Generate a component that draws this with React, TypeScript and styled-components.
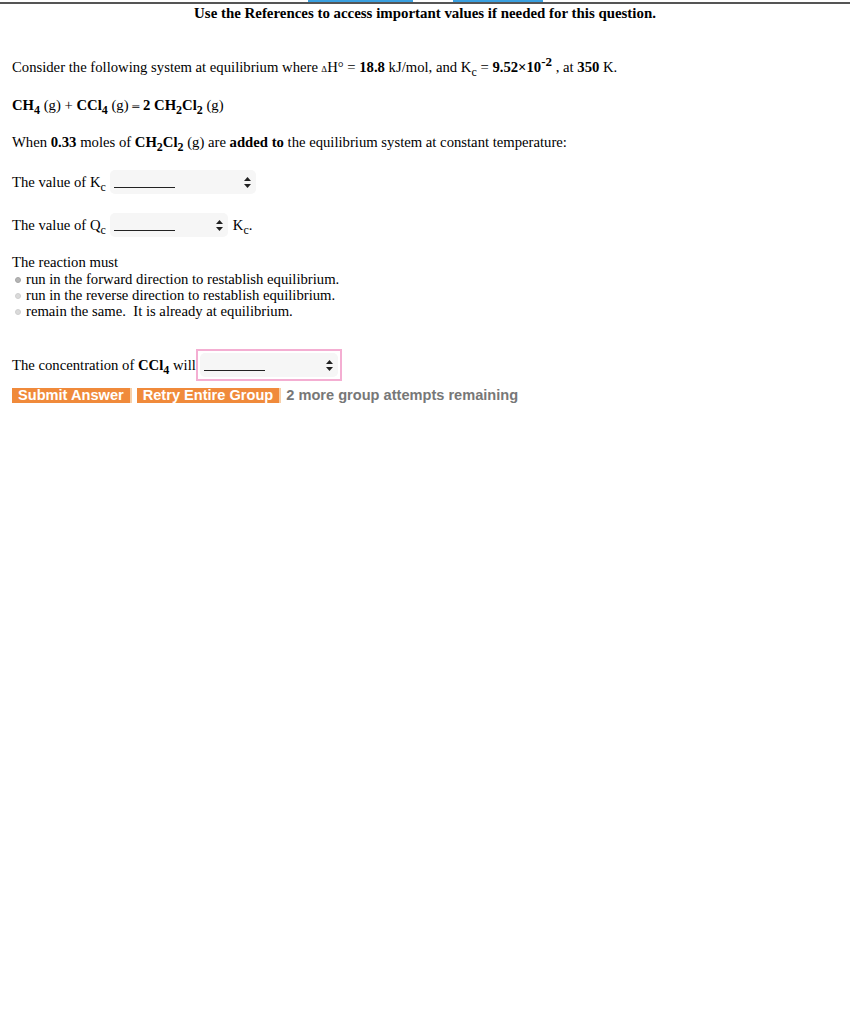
import React from "react";
import styled, { createGlobalStyle } from "styled-components";

const Global = createGlobalStyle`
  html, body { margin: 0; padding: 0; background: #fff; }
  body { font-family: "Liberation Serif", "Times New Roman", serif; color: #000; }
`;

const Page = styled.div`
  width: 850px;
  min-height: 1024px;
`;

const TopRule = styled.div`
  height: 2px;
  margin-top: 2px;
  background: #555;
  display: flex;
  justify-content: center;
  gap: 40px;
`;

const TopLinkStub = styled.span<{ $w: number }>`
  display: block;
  width: ${(p) => p.$w}px;
  height: 2px;
  background: #3aa0e0;
  margin-top: -2px;
`;

const Heading = styled.div`
  text-align: center;
  font-weight: bold;
  font-size: 14.9px;
  line-height: 16px;
  margin-top: 1px;
`;

const Content = styled.div`
  padding: 0 12px;
  font-size: 14.7px;
`;

const Para = styled.div<{ $mt: number }>`
  margin-top: ${(p) => p.$mt}px;
  line-height: 18px;
  white-space: nowrap;
`;

const Sub = styled.sub`
  font-size: 12px;
  vertical-align: -4px;
  line-height: 0;
`;

const Sup = styled.sup`
  font-size: 13px;
  font-weight: bold;
  vertical-align: 6px;
  line-height: 0;
`;

const Delta = styled.span`
  font-size: 9px;
`;

const Equil = styled.span`
  font-size: 10px;
`;

const Row = styled.div<{ $mt: number }>`
  margin-top: ${(p) => p.$mt}px;
  display: flex;
  align-items: center;
  white-space: nowrap;
  height: 24px;
`;

const Label = styled.span<{ $mr?: number }>`
  margin-right: ${(p) => p.$mr ?? 4}px;
`;

const After = styled.span`
  margin-left: 5px;
`;

const SelectBox = styled.div<{ $w: number }>`
  width: ${(p) => p.$w}px;
  height: 24px;
  box-sizing: border-box;
  background: #f6f6f6;
  border-radius: 5px;
  display: flex;
  align-items: center;
  justify-content: space-between;
  padding: 0 5px 0 4px;
`;

const FocusRing = styled.div`
  border: 2px solid #f4aed2;
  padding: 2px;
  display: flex;
`;

const Blank = styled.span`
  display: block;
  width: 61px;
  height: 1px;
  background: #222;
  margin-top: 10px;
`;

const Arrows = styled.svg`
  width: 7px;
  height: 11px;
  display: block;
`;

const RadioRow = styled.div`
  display: flex;
  align-items: center;
  line-height: 16px;
  white-space: nowrap;
`;

const Radio = styled.span<{ $dark?: boolean }>`
  width: 4px;
  height: 4px;
  border-radius: 50%;
  background: ${(p) => (p.$dark ? "#b5b5b5" : "#dadada")};
  border: 1px solid ${(p) => (p.$dark ? "#a5a5a5" : "#cfcfcf")};
  margin: 1px 5px 0 3px;
  flex: none;
`;

const Buttons = styled.div`
  margin-top: 10px;
  display: flex;
  align-items: center;
  font-family: "Liberation Sans", Arial, sans-serif;
  font-weight: bold;
  font-size: 14.6px;
`;

const OrangeButton = styled.span`
  background: #f08a3b;
  color: #fff;
  padding: 0 6px;
  line-height: 15px;
  height: 15px;
  display: inline-flex;
  align-items: center;
  margin-right: 7px;
  box-shadow: 2px 0 0 #f7cfa8;
`;

const Remaining = styled.span`
  color: #777;
`;

const SelectArrows = () => (
  <Arrows viewBox="0 0 7 11">
    <path d="M3.5 0 L7 4 L0 4 Z" fill="#222" />
    <path d="M3.5 11 L7 7 L0 7 Z" fill="#222" />
  </Arrows>
);

export default function App() {
  return (
    <Page>
      <Global />
      <TopRule>
        <TopLinkStub $w={105} />
        <TopLinkStub $w={90} />
      </TopRule>
      <Heading>Use the References to access important values if needed for this question.</Heading>
      <Content>
        <Para $mt={37}>
          Consider the following system at equilibrium where <Delta>∆</Delta>H° = <b>18.8</b> kJ/mol, and K<Sub>c</Sub> = <b>9.52×10<Sup>-2</Sup></b> , at <b>350</b> K.
        </Para>
        <Para $mt={18}>
          <b>CH<Sub>4</Sub></b> (g) + <b>CCl<Sub>4</Sub></b> (g) <Equil>═</Equil> <b>2 CH<Sub>2</Sub>Cl<Sub>2</Sub></b> (g)
        </Para>
        <Para $mt={17}>
          When <b>0.33</b> moles of <b>CH<Sub>2</Sub>Cl<Sub>2</Sub></b> (g) are <b>added to</b> the equilibrium system at constant temperature:
        </Para>
        <Row $mt={19}>
          <Label>The value of K<Sub>c</Sub></Label>
          <SelectBox $w={146}>
            <Blank />
            <SelectArrows />
          </SelectBox>
        </Row>
        <Row $mt={19}>
          <Label>The value of Q<Sub>c</Sub></Label>
          <SelectBox $w={118}>
            <Blank />
            <SelectArrows />
          </SelectBox>
          <After>K<Sub>c</Sub>.</After>
        </Row>
        <Para $mt={16}>The reaction must</Para>
        <div>
          <RadioRow><Radio $dark />run in the forward direction to restablish equilibrium.</RadioRow>
          <RadioRow><Radio />run in the reverse direction to restablish equilibrium.</RadioRow>
          <RadioRow><Radio />remain the same.&nbsp; It is already at equilibrium.</RadioRow>
        </div>
        <Row $mt={34}>
          <Label $mr={0}>The concentration of <b>CCl<Sub>4</Sub></b> will</Label>
          <FocusRing>
            <SelectBox $w={138}>
              <Blank />
              <SelectArrows />
            </SelectBox>
          </FocusRing>
        </Row>
        <Buttons>
          <OrangeButton>Submit Answer</OrangeButton>
          <OrangeButton>Retry Entire Group</OrangeButton>
          <Remaining>2 more group attempts remaining</Remaining>
        </Buttons>
      </Content>
    </Page>
  );
}
